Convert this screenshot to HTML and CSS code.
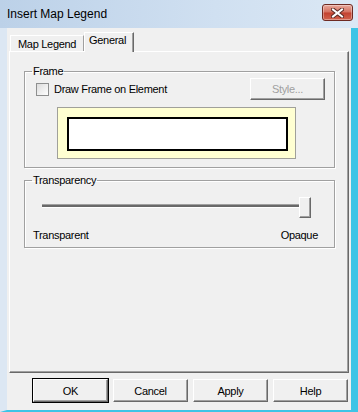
FILE: index.html
```html
<!DOCTYPE html>
<html lang="en">

<head>
    <meta charset="UTF-8" />
    <meta name="viewport" content="width=device-width, initial-scale=1.0" />
    <title>Insert Map Legend</title>
    <link rel="stylesheet" href="styles.css">
</head>

<body>
    <div class="window">
        <div class="titlebar">
            <span class="title">Insert Map Legend</span>
            <button class="close" type="button">
                <svg width="13" height="10" viewBox="0 0 13 10">
                    <path d="M2 1.5 L11 8.5 M11 1.5 L2 8.5" stroke="#5a2a24" stroke-width="4" stroke-linecap="square" />
                    <path d="M2 1.5 L11 8.5 M11 1.5 L2 8.5" stroke="#fff" stroke-width="2" stroke-linecap="square" />
                </svg>
            </button>
        </div>

        <div class="client">
            <div class="tabs">
                <div class="tab">Map Legend</div>
                <div class="tab active">General</div>
            </div>

            <div class="pane">
                <fieldset class="group">
                    <legend>Frame</legend>
                    <div class="frame-row">
                        <label class="check"><span class="box"></span>Draw Frame on Element</label>
                        <button class="btn small" type="button" disabled>Style...</button>
                    </div>
                    <div class="preview">
                        <div class="preview-inner"></div>
                    </div>
                </fieldset>

                <fieldset class="group second">
                    <legend>Transparency</legend>
                    <div class="slider">
                        <div class="track"></div>
                        <div class="thumb"></div>
                    </div>
                    <div class="ends">
                        <span>Transparent</span>
                        <span>Opaque</span>
                    </div>
                </fieldset>
            </div>

            <div class="buttons">
                <button class="btn default" type="button">OK</button>
                <button class="btn" type="button">Cancel</button>
                <button class="btn" type="button">Apply</button>
                <button class="btn" type="button">Help</button>
            </div>
        </div>
    </div>
</body>

</html>
```

FILE: styles.css
```css
body {
    margin: 0;
    padding: 0;
    font-family: "Liberation Sans", Arial, sans-serif;
    font-size: 11px;
    letter-spacing: -0.3px;
    color: #000;
    background: #5b3b35;
}

.window {
    width: 358px;
    height: 412px;
    display: flex;
    flex-direction: column;
    background: #f0f0f0;
}

.titlebar {
    height: 28px;
    flex: none;
    display: flex;
    align-items: flex-start;
    justify-content: space-between;
    padding: 0 5px 0 7px;
    box-sizing: border-box;
    background: linear-gradient(to right, #bcd1e8, #d0e0f1 60%, #dbe8f5);
}

.title {
    font-size: 12px;
    letter-spacing: 0;
    line-height: 14px;
    margin-top: 7px;
    color: #000;
}

.close {
    width: 31px;
    height: 17px;
    margin-top: 4px;
    padding: 0;
    border: 1px solid #6e2a22;
    border-radius: 3px;
    background: linear-gradient(#e9a99c, #d4705f 48%, #c2412f 52%, #d2634e);
    box-shadow: inset 0 0 0 1px rgba(255, 255, 255, 0.35);
    display: flex;
    align-items: center;
    justify-content: center;
}

.client {
    flex: 1;
    display: flex;
    flex-direction: column;
    padding: 4px 0 0 2px;
    border-left: 7px solid #dce7f3;
    border-right: 7px solid #3ec4e6;
    border-bottom: 2px solid #3ec4e6;
}

.tabs {
    display: flex;
    align-items: flex-start;
    height: 20px;
    margin-left: 1px;
    margin-bottom: -1px;
    position: relative;
    z-index: 1;
}

.tab {
    height: 16px;
    margin-top: 3px;
    padding: 1px 7px 0 7px;
    box-sizing: border-box;
    white-space: nowrap;
    line-height: 15px;
    border-top: 1px solid #fff;
    border-left: 1px solid #fff;
    border-right: 1px solid #a0a0a0;
    background: #f0f0f0;
}

.tab:first-child {
    width: 74px;
}

.tab.active {
    height: 20px;
    margin-top: 0;
    width: 50px;
    padding: 0 4px;
    line-height: 15px;
    border-right: 1px solid #696969;
    box-shadow: inset -1px 0 0 #a0a0a0;
}

.pane {
    width: 340px;
    height: 322px;
    box-sizing: border-box;
    border-top: 1px solid #fff;
    border-left: 1px solid #fff;
    border-right: 1px solid #696969;
    border-bottom: 1px solid #696969;
    box-shadow: inset -1px -1px 0 #a0a0a0;
    padding-top: 12px;
}

.group {
    margin: 0 13px 0 14px;
    padding: 0 0 8px 0;
    border: 1px solid #a0a0a0;
    box-shadow: 1px 1px 0 #fff, inset 1px 1px 0 #fff;
}

.group.second {
    margin-top: 5px;
    padding-bottom: 5px;
}

legend {
    margin-left: 7px;
    padding: 0 1px;
    line-height: 14px;
}

.frame-row {
    height: 22px;
    display: flex;
    align-items: center;
    justify-content: space-between;
    padding: 0 9px 0 11px;
}

.check {
    display: flex;
    align-items: center;
    gap: 5px;
}

.box {
    width: 11px;
    height: 11px;
    border: 1px solid #8e8f8f;
    background: linear-gradient(135deg, #dcdcdc, #fff);
}

.btn {
    width: 75px;
    height: 23px;
    padding: 0;
    font-family: "Liberation Sans", Arial, sans-serif;
    font-size: 11px;
    letter-spacing: -0.3px;
    color: #000;
    background: #f0f0f0;
    border-top: 1px solid #fff;
    border-left: 1px solid #fff;
    border-right: 1px solid #696969;
    border-bottom: 1px solid #696969;
    box-shadow: inset -1px -1px 0 #a0a0a0;
}

.btn.small {
    height: 22px;
    color: #a0a0a0;
}

.btn.default {
    outline: 1px solid #000;
    outline-offset: 0;
}

.preview {
    width: 239px;
    height: 52px;
    box-sizing: border-box;
    margin: 7px 0 0 32px;
    padding: 9px 7px 7px 9px;
    border: 1px solid #a0a09a;
    background: #ffffd2;
}

.preview-inner {
    height: 100%;
    box-sizing: border-box;
    border: 2px solid #000;
    background: #fff;
}

.slider {
    display: flex;
    align-items: flex-start;
    width: 269px;
    height: 21px;
    margin: 10px 0 0 17px;
}

.track {
    flex: 1;
    height: 2px;
    margin-top: 7px;
    border-top: 1px solid #a0a0a0;
    border-bottom: 1px solid #fff;
    background: #696969;
}

.thumb {
    width: 12px;
    height: 21px;
    box-sizing: border-box;
    background: #f0f0f0;
    border-top: 1px solid #fff;
    border-left: 1px solid #fff;
    border-right: 1px solid #696969;
    border-bottom: 1px solid #696969;
    box-shadow: inset -1px -1px 0 #a0a0a0;
}

.ends {
    display: flex;
    justify-content: space-between;
    line-height: 14px;
    margin-top: 10px;
    padding: 0 16px 0 8px;
}

.buttons {
    display: flex;
    gap: 5px;
    margin-top: 6px;
    padding-left: 24px;
}
```
